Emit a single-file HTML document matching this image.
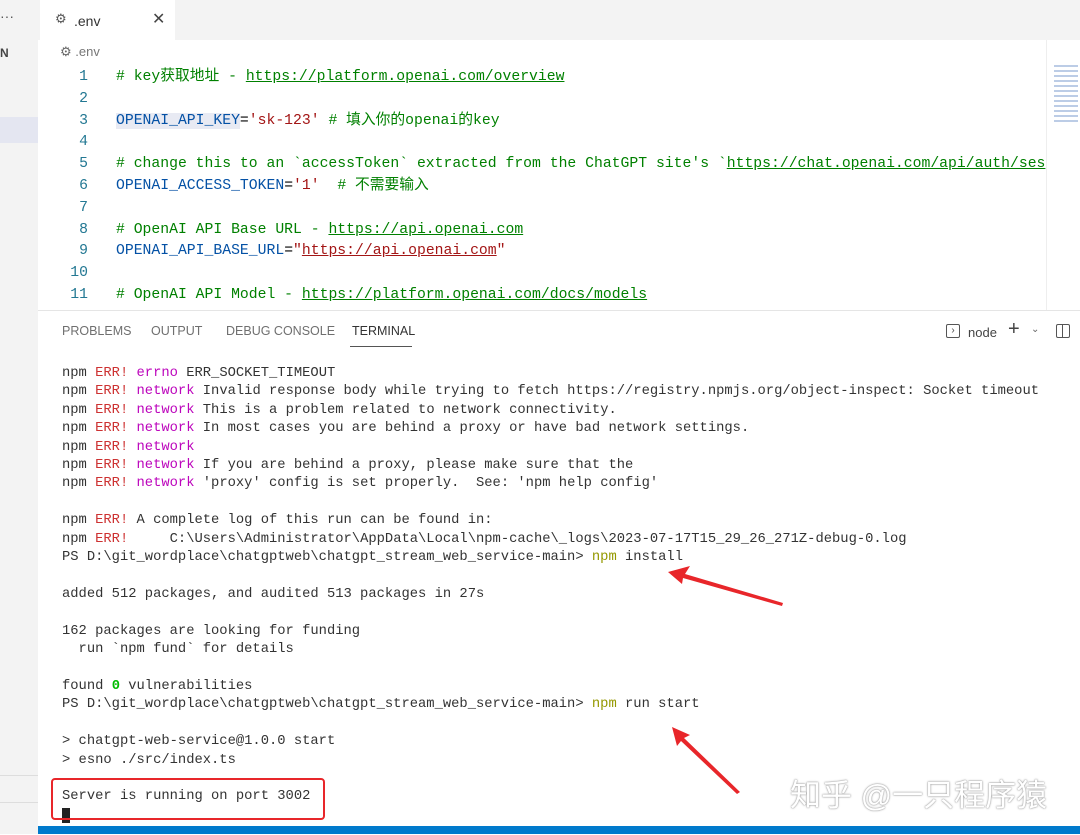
<!DOCTYPE html>
<html><head><meta charset="utf-8"><style>
body{margin:0;width:1080px;height:834px;overflow:hidden;background:#fff;position:relative;font-family:"Liberation Sans","Noto Sans CJK SC",sans-serif}
.abs{position:absolute}
.side{left:0;top:0;width:38px;height:834px;background:#f3f3f3}
.tabbar{left:38px;top:0;width:1042px;height:40px;background:#f3f3f3}
.tab{left:40px;top:0;width:135px;height:40px;background:#fff;font-size:14px;color:#333}
.code{left:40px;top:67px;font-family:"Liberation Mono","Noto Sans CJK SC",monospace;font-size:14.75px;line-height:21.8px;white-space:pre;color:#0000ff}
.ln{display:inline-block;width:48px;text-align:right;color:#237893;margin-right:28px}
.c{color:#008000}.s{color:#a31515}.v{color:#0451a5}.u{text-decoration:underline}
.term{left:62px;top:365px;font-family:"Liberation Mono","Noto Sans CJK SC",monospace;font-size:13.8px;line-height:18.4px;white-space:pre;color:#333}
.r{color:#cd3131}.m{color:#bc05bc}.y{color:#949800}.g{color:#00bc00;font-weight:bold}
.ptabs{top:324px;font-size:12.5px;color:#6f6f6f}
</style></head><body>
<div class="abs side"></div>
<div class="abs" style="left:0;top:8px;font-size:14px;color:#555">···</div>
<div class="abs" style="left:0;top:46px;font-size:12px;font-weight:bold;color:#444">N</div>
<div class="abs" style="left:0;top:117px;width:38px;height:26px;background:#e4e6f1"></div>
<div class="abs" style="left:0;top:775px;width:38px;height:1px;background:#ddd"></div>
<div class="abs" style="left:0;top:802px;width:38px;height:1px;background:#ddd"></div>
<div class="abs tabbar"></div>
<div class="abs tab"><span class="abs" style="left:15px;top:11px;font-size:13px;color:#555">⚙</span><span class="abs" style="left:34px;top:13px">.env</span><span class="abs" style="left:112px;top:9px;font-size:16px;color:#444">✕</span></div>
<div class="abs" style="left:60px;top:44px;font-size:13px;color:#666">⚙ <span style="color:#777">.env</span></div>
<div class="abs code"><span class="ln">1</span><span class="c"># key获取地址 - <span class="u">https://platform.openai.com/overview</span></span>
<span class="ln">2</span>
<span class="ln">3</span><span class="v" style="background:#e8eaf3">OPENAI_API_KEY</span><span style="color:#000">=</span><span class="s">'sk-123'</span> <span class="c"># 填入你的openai的key</span>
<span class="ln">4</span>
<span class="ln">5</span><span class="c"># change this to an `accessToken` extracted from the ChatGPT site's `<span class="u">https://chat.openai.com/api/auth/ses</span></span>
<span class="ln">6</span><span class="v">OPENAI_ACCESS_TOKEN</span><span style="color:#000">=</span><span class="s">'1'</span>  <span class="c"># 不需要输入</span>
<span class="ln">7</span>
<span class="ln">8</span><span class="c"># OpenAI API Base URL - <span class="u">https://api.openai.com</span></span>
<span class="ln">9</span><span class="v">OPENAI_API_BASE_URL</span><span style="color:#000">=</span><span class="s">"<span class="u">https://api.openai.com</span>"</span>
<span class="ln">10</span>
<span class="ln">11</span><span class="c"># OpenAI API Model - <span class="u">https://platform.openai.com/docs/models</span></span></div>
<div class="abs" style="left:1046px;top:40px;width:1px;height:270px;background:#eee"></div>
<div class="abs" style="left:1054px;top:65px;width:24px;height:60px;background:repeating-linear-gradient(#9fb7dc 0 2px,#fff 2px 5px);opacity:.7"></div>
<div class="abs" style="left:38px;top:310px;width:1042px;height:524px;background:#fff;border-top:1px solid #e5e5e5"></div>
<div class="abs ptabs" style="left:62px">PROBLEMS</div>
<div class="abs ptabs" style="left:151px">OUTPUT</div>
<div class="abs ptabs" style="left:226px">DEBUG CONSOLE</div>
<div class="abs ptabs" style="left:352px;color:#333">TERMINAL</div>
<div class="abs" style="left:350px;top:346px;width:62px;height:1px;background:#555"></div>
<div class="abs" style="left:946px;top:324px;width:12px;height:12px;border:1px solid #555;border-radius:2px;font-size:10px;line-height:12px;text-align:center;color:#444">›</div>
<div class="abs" style="left:968px;top:325px;font-size:13px;color:#444">node</div>
<div class="abs" style="left:1008px;top:318px;font-size:20px;color:#444">+</div>
<div class="abs" style="left:1031px;top:324px;font-size:10px;color:#666">⌄</div>
<div class="abs" style="left:1056px;top:324px;width:12px;height:12px;border:1px solid #555;border-radius:2px"><div style="position:absolute;left:5px;top:0;width:1px;height:12px;background:#555"></div></div>
<div class="abs term">npm <span class="r">ERR!</span> <span class="m">errno</span> ERR_SOCKET_TIMEOUT
npm <span class="r">ERR!</span> <span class="m">network</span> Invalid response body while trying to fetch https://registry.npmjs.org/object-inspect: Socket timeout
npm <span class="r">ERR!</span> <span class="m">network</span> This is a problem related to network connectivity.
npm <span class="r">ERR!</span> <span class="m">network</span> In most cases you are behind a proxy or have bad network settings.
npm <span class="r">ERR!</span> <span class="m">network</span>
npm <span class="r">ERR!</span> <span class="m">network</span> If you are behind a proxy, please make sure that the
npm <span class="r">ERR!</span> <span class="m">network</span> 'proxy' config is set properly.  See: 'npm help config'

npm <span class="r">ERR!</span> A complete log of this run can be found in:
npm <span class="r">ERR!</span>     C:\Users\Administrator\AppData\Local\npm-cache\_logs\2023-07-17T15_29_26_271Z-debug-0.log
PS D:\git_wordplace\chatgptweb\chatgpt_stream_web_service-main&gt; <span class="y">npm</span> install

added 512 packages, and audited 513 packages in 27s

162 packages are looking for funding
  run `npm fund` for details

found <span class="g">0</span> vulnerabilities
PS D:\git_wordplace\chatgptweb\chatgpt_stream_web_service-main&gt; <span class="y">npm</span> run start

&gt; chatgpt-web-service@1.0.0 start
&gt; esno ./src/index.ts

Server is running on port 3002
<span style="background:#222"> </span></div>
<div class="abs" style="left:51px;top:778px;width:270px;height:38px;border:2.5px solid #e8262a;border-radius:4px"></div>
<svg class="abs" style="left:0;top:0" width="1080" height="834">
<polygon points="668,572 690,566 685,574 783,603 782,606 683,578 682,584" fill="#e8262a"/>
<polygon points="672,727 690,735 684,738 740,792 737,794 681,741 677,746" fill="#e8262a"/>
</svg>
<div class="abs" style="left:790px;top:770px;font-size:31px;color:#fff;text-shadow:0 0 2px #999,0 0 1px #888">知乎 @一只程序猿</div>
<div class="abs" style="left:38px;top:826px;width:1042px;height:8px;background:#007acc"></div>
</body></html>
